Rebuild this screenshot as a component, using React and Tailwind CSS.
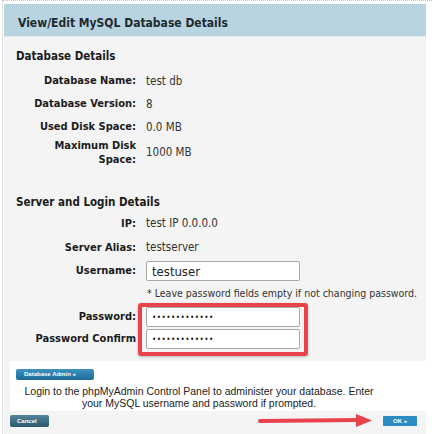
import React from 'react';

const tahoma = { fontFamily: '"DejaVu Sans Condensed", "DejaVu Sans", sans-serif' };
const arial = { fontFamily: '"Liberation Sans", Arial, sans-serif' };

const Row = ({ label, children, h = 'h-[23px]' }) => (
  <div className={`flex items-center ${h}`}>
    <div className="w-[120px] text-right font-bold text-[11px] text-[#1b1b1b]">{label}</div>
    <div className="ml-[10px] text-[11.5px] text-[#333]">{children}</div>
  </div>
);

const Field = ({ value, type = 'text' }) => (
  <input
    type={type}
    defaultValue={value}
    readOnly
    className={`w-[154px] h-[20px] bg-white border border-[#a9a9a9] rounded-[2px] px-[5px] text-[#222] outline-none ${type === 'password' ? 'text-[8px] tracking-[0.5px]' : 'text-[13px]'}`}
    style={tahoma}
  />
);

export default function App() {
  return (
    <div className="w-[432px] h-[434px] bg-white overflow-hidden" style={tahoma}>
      <div className="ml-[2px] h-full border-l border-t border-dotted border-[#c4c4c4] pt-[3px] pl-[1px]">
        <div className="w-[422px] bg-[#f4f4f4]">
          {/* header */}
          <div className="h-[33px] bg-[#b8d4e1] pl-[14px] pt-[11px] border-b border-[#dfe9ee]">
            <h1 className="text-[12px] leading-[16px] font-bold text-[#1e2a30]">View/Edit MySQL Database Details</h1>
          </div>

          {/* body */}
          <div className="pl-[12px] pt-[10px] pb-[11px]">
            <h2 className="h-[18px] leading-[18px] text-[11.5px] font-bold text-[#1b1b1b]">Database Details</h2>
            <div className="mt-[5px]">
              <Row label="Database Name:">test db</Row>
              <Row label="Database Version:">8</Row>
              <Row label="Used Disk Space:">0.0 MB</Row>
              <div className="flex items-center">
                <div className="w-[120px] text-right font-bold text-[11px] leading-[14px] text-[#1b1b1b]">
                  Maximum Disk<br />Space:
                </div>
                <div className="ml-[10px] text-[11.5px] text-[#333]">1000 MB</div>
              </div>
            </div>

            <h2 className="mt-[26px] h-[18px] leading-[18px] text-[11.5px] font-bold text-[#1b1b1b]">Server and Login Details</h2>
            <div className="mt-[1px]">
              <Row label="IP:" h="h-[24px]">test IP 0.0.0.0</Row>
              <Row label="Server Alias:" h="h-[24px]">testserver</Row>
              <Row label="Username:" h="h-[22px]">
                <Field value="testuser" />
              </Row>
              <div className="h-[24px] flex items-center pl-[131px] text-[10.5px] text-[#333] whitespace-nowrap">
                * Leave password fields empty if not changing password.
              </div>
              <div className="relative">
                <Row label="Password:" h="h-[22px]">
                  <Field value="passwordpass1" type="password" />
                </Row>
                <Row label="Password Confirm" h="h-[22px]">
                  <Field value="passwordpass1" type="password" />
                </Row>
                <div className="absolute left-[122px] top-[-3px] w-[170px] h-[53px] border-[4px] border-[#e8434a] rounded-[3px] shadow-[0_1px_3px_rgba(0,0,0,0.25)]" />
              </div>
            </div>
          </div>

          {/* phpMyAdmin */}
          <div className="pl-[6px]">
            <div className="bg-white h-[50px] pt-[8px] pl-[6px]" style={arial}>
              <button className="block w-[78px] h-[11px] rounded-[2px] bg-gradient-to-b from-[#3d93c2] to-[#1c6a96] text-white text-[6px] leading-[11px] font-bold text-left pl-[8px]">
                Database Admin »
              </button>
              <p className="mt-[5px] w-[366px] text-center text-[10.5px] leading-[12px] text-[#222]">
                Login to the phpMyAdmin Control Panel to administer your database. Enter your MySQL username and password if prompted.
              </p>
            </div>
          </div>

          {/* footer */}
          <div className="relative h-[24px] flex items-start justify-between pl-[6px] pr-[9px] pt-[4px]">
            <button className="w-[39px] h-[12px] rounded-[2px] bg-gradient-to-b from-[#52849a] to-[#2b5a6f] text-white text-[6px] leading-[12px] font-bold text-left pl-[7px]" style={arial}>
              Cancel
            </button>
            <button className="mt-[1px] w-[34px] h-[10px] rounded-[1px] bg-[#2a8cbf] text-white text-[6px] leading-[10px] font-bold" style={arial}>
              OK »
            </button>
            <svg className="absolute left-[254px] top-[1px]" width="116" height="18" viewBox="0 0 116 18">
              <path d="M2 9 L100 8" stroke="#e8434a" strokeWidth="4" strokeLinecap="round" fill="none" />
              <path d="M98 2 L114 8.5 L98 15 Z" fill="#e8434a" />
            </svg>
          </div>
        </div>
      </div>
    </div>
  );
}
